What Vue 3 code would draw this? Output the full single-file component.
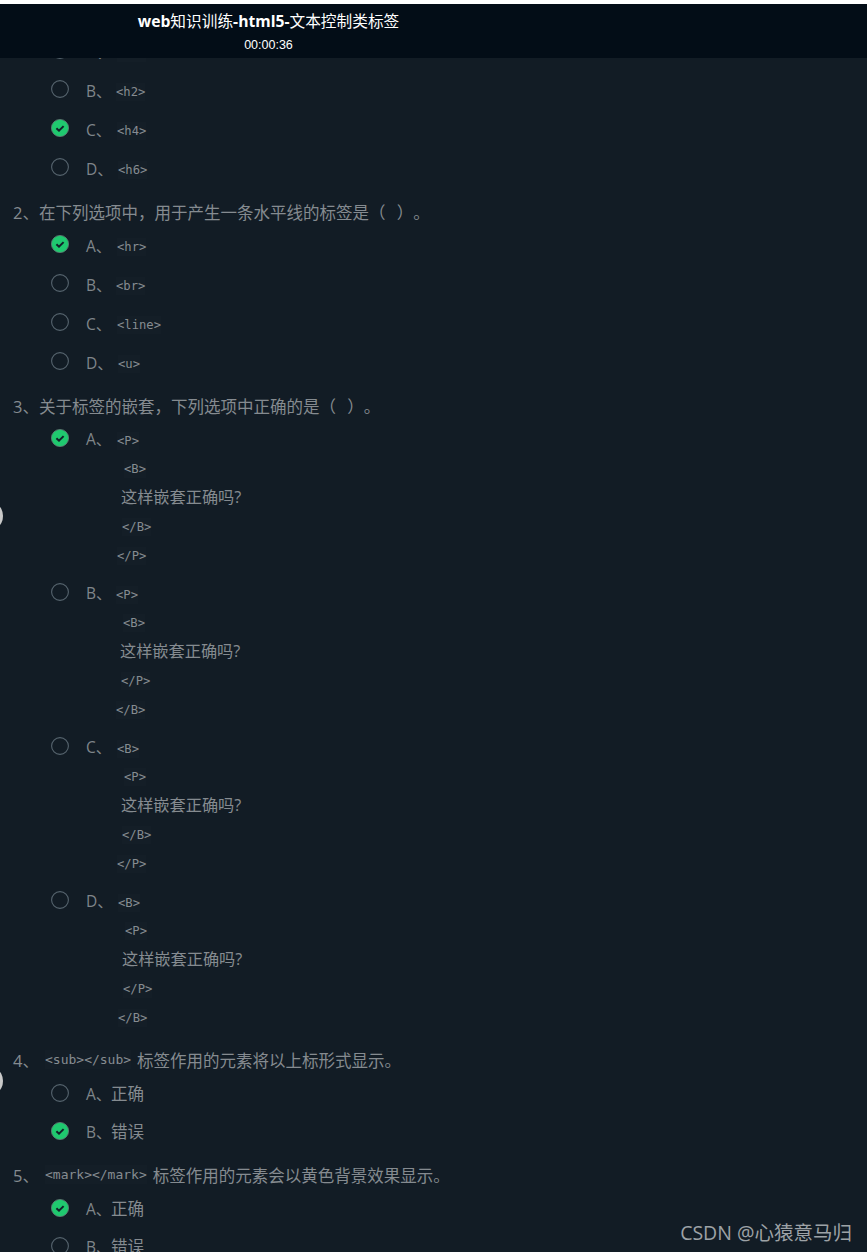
<script setup>
const rows = [
  { type: 'opt', label: 'A、', code: '<h1>', first: true },
  { type: 'opt', label: 'B、', code: '<h2>' },
  { type: 'opt', label: 'C、', code: '<h4>', on: true },
  { type: 'opt', label: 'D、', code: '<h6>' },
  { type: 'q', no: '2、', text: '在下列选项中，用于产生一条水平线的标签是（ ）。' },
  { type: 'opt', label: 'A、', code: '<hr>', on: true },
  { type: 'opt', label: 'B、', code: '<br>' },
  { type: 'opt', label: 'C、', code: '<line>' },
  { type: 'opt', label: 'D、', code: '<u>' },
  { type: 'q', no: '3、', text: '关于标签的嵌套，下列选项中正确的是（ ）。' },
  { type: 'nest', label: 'A、', outer: 'P', inner: 'B', close: ['B', 'P'], on: true },
  { type: 'nest', label: 'B、', outer: 'P', inner: 'B', close: ['P', 'B'] },
  { type: 'nest', label: 'C、', outer: 'B', inner: 'P', close: ['B', 'P'] },
  { type: 'nest', label: 'D、', outer: 'B', inner: 'P', close: ['P', 'B'] },
  { type: 'q', no: '4、', code: '<sub></sub>', text: '标签作用的元素将以上标形式显示。' },
  { type: 'opt', label: 'A、', text: '正确' },
  { type: 'opt', label: 'B、', text: '错误', on: true },
  { type: 'q', no: '5、', code: '<mark></mark>', text: '标签作用的元素会以黄色背景效果显示。' },
  { type: 'opt', label: 'A、', text: '正确', on: true },
  { type: 'opt', label: 'B、', text: '错误' }
]
</script>

<template>
  <div class="page">
    <div class="topline"></div>
    <div class="header">
      <div class="title"><b>web</b>知识训练<b>-html5-</b>文本控制类标签</div>
      <div class="time">00:00:36</div>
    </div>

    <div class="list">
      <template v-for="(r, i) in rows" :key="i">
        <div v-if="r.type === 'q'" class="question" :class="{ 'with-code': r.code }">
          <span class="no">{{ r.no }}</span>
          <code v-if="r.code" class="code q-code">{{ r.code }}</code>
          <span class="q-text">{{ r.text }}</span>
        </div>

        <div v-else class="option" :class="{ nest: r.type === 'nest', plain: r.text }">
          <svg v-if="r.on" class="radio" viewBox="0 0 18 18">
            <circle cx="9" cy="9" r="8.6" fill="#1fc96f" stroke="#5f7f76" stroke-width=".8" />
            <path d="M5.4 9.2l2.6 2.5 4.6-4.6" fill="none" stroke="#12222a" stroke-width="2" />
          </svg>
          <svg v-else class="radio" viewBox="0 0 18 18">
            <circle cx="9" cy="9" r="8.4" fill="none" stroke="#56646e" stroke-width="1.1" />
          </svg>
          <span class="label" :class="'label-' + r.label[0]">{{ r.label }}</span>

          <div v-if="r.type === 'nest'" class="lines">
            <div class="line"><code class="code">&lt;{{ r.outer }}&gt;</code></div>
            <div class="line l1"><code class="code">&lt;{{ r.inner }}&gt;</code></div>
            <div class="line l2">这样嵌套正确吗?</div>
            <div class="line l3"><code class="code">&lt;/{{ r.close[0] }}&gt;</code></div>
            <div class="line"><code class="code">&lt;/{{ r.close[1] }}&gt;</code></div>
          </div>
          <code v-else-if="r.code" class="code opt-code">{{ r.code }}</code>
          <span v-else class="plain-text">{{ r.text }}</span>
        </div>
      </template>
    </div>

    <div class="dot dot1"></div>
    <div class="dot dot2"></div>
    <div class="mark">CSDN @心猿意马归</div>
  </div>
</template>

<style>
body {
  margin: 0;
  background: #121c25;
}
</style>

<style scoped>
.page {
  position: relative;
  width: 867px;
  height: 1252px;
  overflow: hidden;
  background: #121c25;
  color: #858b90;
  font-family: "Open Sans", "Noto Sans CJK SC", sans-serif;
  font-size: 16.5px;
  text-spacing-trim: space-all;
}
.topline {
  position: absolute;
  top: 0;
  left: 0;
  right: 0;
  height: 4px;
  background: #fff;
  z-index: 3;
}
.header {
  position: absolute;
  top: 4px;
  left: 0;
  right: 0;
  height: 54px;
  background: #030d17;
  color: #fff;
  text-align: center;
  width: 537px;
  padding-right: 330px;
  z-index: 2;
}
.title {
  font-size: 15.7px;
  line-height: 20px;
  padding-top: 7px;
}
.time {
  font-family: "Liberation Sans", sans-serif;
  font-size: 12.5px;
  line-height: 16px;
  margin-top: 6px;
}
.list {
  padding-top: 31px;
}
.option {
  display: flex;
  align-items: center;
  height: 39px;
  padding-left: 51px;
}
.option.plain {
  height: 38px;
}
.option.plain .radio {
  margin-top: 0;
}
.option.nest {
  align-items: flex-start;
  height: 154px;
}
.option.nest .radio {
  margin-top: 9.5px;
}
.option.nest .label {
  margin-top: 5.5px;
  line-height: 28px;
}
.radio {
  width: 18px;
  height: 18px;
  flex: none;
  margin-top: -2px;
}
.label {
  flex: none;
  width: 31px;
  margin-left: 17px;
  margin-top: 2px;
  color: #7f858a;
  font-size: 15.5px;
  white-space: nowrap;
}
.label-B { width: 30px; }
.label-D { width: 32px; }
.plain .label {
  width: 25px;
  margin-top: 1px;
}
.opt-code {
  margin-top: 4px;
}
.code {
  font-family: "DejaVu Sans Mono", monospace;
  font-size: 12.2px;
  color: #868c91;
  background: #141e27;
  padding: 2px 0;
}
.lines {
  margin-top: 6.5px;
}
.line {
  height: 28.75px;
  line-height: 28px;
}
.line .code {
  vertical-align: 1px;
}
.l1 { margin-left: 7px; }
.l2 {
  margin-left: 4px;
  font-size: 16.2px;
}
.l3 { margin-left: 5px; }
.question {
  display: flex;
  align-items: center;
  height: 38px;
  padding-left: 13px;
  padding-top: 11px;
  box-sizing: border-box;
}
.question.with-code {
  height: 39px;
  padding-top: 10px;
}
.no {
  flex: none;
  width: 26px;
}
.q-text {
  word-spacing: 7px;
  white-space: nowrap;
}
.q-code {
  font-size: 13px;
  margin-left: 6px;
  margin-right: 6px;
}
.dot {
  position: absolute;
  left: -8px;
  width: 11px;
  height: 20px;
  border-radius: 50%;
  background: #c9c9c9;
}
.dot1 { top: 506px; }
.dot2 { top: 1071px; }
.mark {
  position: absolute;
  right: 15px;
  bottom: 6px;
  font-family: "Open Sans", "Noto Sans CJK SC", sans-serif;
  font-size: 19.5px;
  color: #9da2a6;
  white-space: nowrap;
}
</style>
